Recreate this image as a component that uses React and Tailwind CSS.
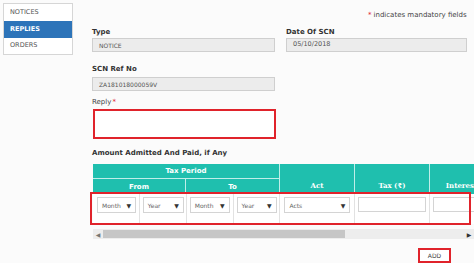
import React from "react";

const font = { fontFamily: "Verdana, 'DejaVu Sans', sans-serif" };

function Select({ label, w }) {
  return (
    <div className={`flex items-center justify-between h-[16px] border border-[#d4d4d4] bg-white px-[4px] text-[6px] text-[#666] ${w}`}>
      <span>{label}</span>
      <span className="text-[6px] text-[#333]">▼</span>
    </div>
  );
}

export default function App() {
  return (
    <div
      className="relative flex w-[474px] h-[263px] overflow-hidden bg-[#fbfbfb] text-[#333]"
      style={font}
    >
      {/* left nav */}
      <div className="pl-[3px] pt-[3px] w-[92px] shrink-0">
        <div className="w-[70px] border border-[#d6d6d6] bg-white text-[6.5px] flex flex-col">
          <div className="h-[17px] flex items-center pl-[6px] text-[#555]">NOTICES</div>
          <div className="h-[17px] flex items-center pl-[6px] bg-[#2d74b9] text-white font-bold">REPLIES</div>
          <div className="h-[16px] flex items-center pl-[6px] text-[#555]">ORDERS</div>
        </div>
      </div>

      {/* main */}
      <div className="flex flex-col w-[382px] shrink-0">
        <div className="h-[26px] flex items-end pb-[5px] pl-[276px] whitespace-nowrap text-[7px] text-[#444]">
          <span className="text-[#e0232b] mr-[2px]">*</span>indicates mandatory fields
        </div>

        <div className="flex gap-[11px]">
          <div className="w-[183px] flex flex-col">
            <div className="text-[7px] font-bold h-[13px] flex items-center">Type</div>
            <div className="h-[14px] border border-[#cfcfcf] bg-[#ececec] flex items-center pl-[6px] text-[6px] text-[#555]">NOTICE</div>
          </div>
          <div className="w-[181px] flex flex-col">
            <div className="text-[7px] font-bold h-[13px] flex items-center">Date Of SCN</div>
            <div className="h-[14px] border border-[#cfcfcf] bg-[#ececec] flex items-center pl-[6px] text-[6.5px] text-[#555]">05/10/2018</div>
          </div>
        </div>

        <div className="mt-[13px] w-[183px] flex flex-col">
          <div className="text-[7px] font-bold h-[7px] flex items-center">SCN Ref No</div>
          <div className="mt-[5px] h-[14px] border border-[#cfcfcf] bg-[#ececec] flex items-center pl-[6px] text-[6px] text-[#555]">ZA181018000059V</div>
        </div>

        <div className="mt-[6px] text-[7px] h-[10px] flex items-center text-[#444]">
          Reply<span className="text-[#e0232b] ml-[1px]">*</span>
        </div>
        <div className="mt-[2px] ml-[1px] w-[183px] h-[31px] border-2 border-[#e0232b] bg-white"></div>

        <div className="mt-[9px] text-[7px] font-bold h-[10px] flex items-center">Amount Admitted And Paid, if Any</div>

        {/* table */}
        <div className="relative mt-[6px] ml-[1px] w-[400px]">
          <div className="flex bg-[#1fbfae] text-white font-bold text-[7px] h-[30px]">
            <div className="w-[187px] flex flex-col border-r border-[#bfeee9]">
              <div className="h-[15px] flex items-center justify-center border-b border-[#bfeee9]">Tax Period</div>
              <div className="flex h-[15px]">
                <div className="w-[93px] flex items-center justify-center border-r border-[#bfeee9]">From</div>
                <div className="flex-1 flex items-center justify-center">To</div>
              </div>
            </div>
            <div className="w-[75px] flex items-end justify-center pb-[3px] border-r border-[#bfeee9]" style={{ fontFamily: "Georgia, 'DejaVu Serif', serif" }}>Act</div>
            <div className="w-[75px] flex items-end justify-center pb-[3px] border-r border-[#bfeee9]" style={{ fontFamily: "Georgia, 'DejaVu Serif', serif" }}>Tax (₹)</div>
            <div className="flex-1 flex items-end justify-center pb-[3px]" style={{ fontFamily: "Georgia, 'DejaVu Serif', serif" }}>Interest</div>
          </div>
          <div className="flex h-[30px] bg-white">
            <div className="w-[47px] flex items-start pt-[3px] pl-[4px] border-r border-[#e2e2e2]"><Select label="Month" w="w-[39px]" /></div>
            <div className="w-[47px] flex items-start pt-[3px] pl-[3px] border-r border-[#e2e2e2]"><Select label="Year" w="w-[41px]" /></div>
            <div className="w-[47px] flex items-start pt-[3px] pl-[3px] border-r border-[#e2e2e2]"><Select label="Month" w="w-[40px]" /></div>
            <div className="w-[47px] flex items-start pt-[3px] pl-[3px] border-r border-[#e2e2e2]"><Select label="Year" w="w-[40px]" /></div>
            <div className="w-[75px] flex items-start pt-[3px] pl-[4px] border-r border-[#e2e2e2]"><Select label="Acts" w="w-[66px]" /></div>
            <div className="w-[75px] flex items-start pt-[3px] pl-[3px] border-r border-[#e2e2e2]"><div className="w-[68px] h-[15px] border border-[#d4d4d4] bg-white"></div></div>
            <div className="flex-1 flex items-start pt-[3px] pl-[3px]"><div className="w-[60px] h-[15px] border border-[#d4d4d4] bg-white"></div></div>
          </div>
          <div className="absolute left-[-3px] top-[28px] w-[381px] h-[33px] border-2 border-[#e0232b] pointer-events-none"></div>
        </div>

        {/* scrollbar */}
        <div className="mt-[5px] ml-[1px] w-[381px] h-[10px] bg-[#ededed] flex items-center">
          <span className="w-[10px] text-center text-[6px] text-[#777]">◀</span>
          <div className="w-[242px] h-[8px] bg-[#c6c6c6]"></div>
          <div className="flex-1"></div>
          <span className="w-[10px] text-center text-[6px] text-[#333]">▶</span>
        </div>

        <div className="mt-[9px] flex pl-[326px]">
          <div className="w-[33px] h-[15px] border-2 border-[#e0232b] bg-white flex items-center justify-center text-[6px] text-[#444]">ADD</div>
        </div>
      </div>
    </div>
  );
}
